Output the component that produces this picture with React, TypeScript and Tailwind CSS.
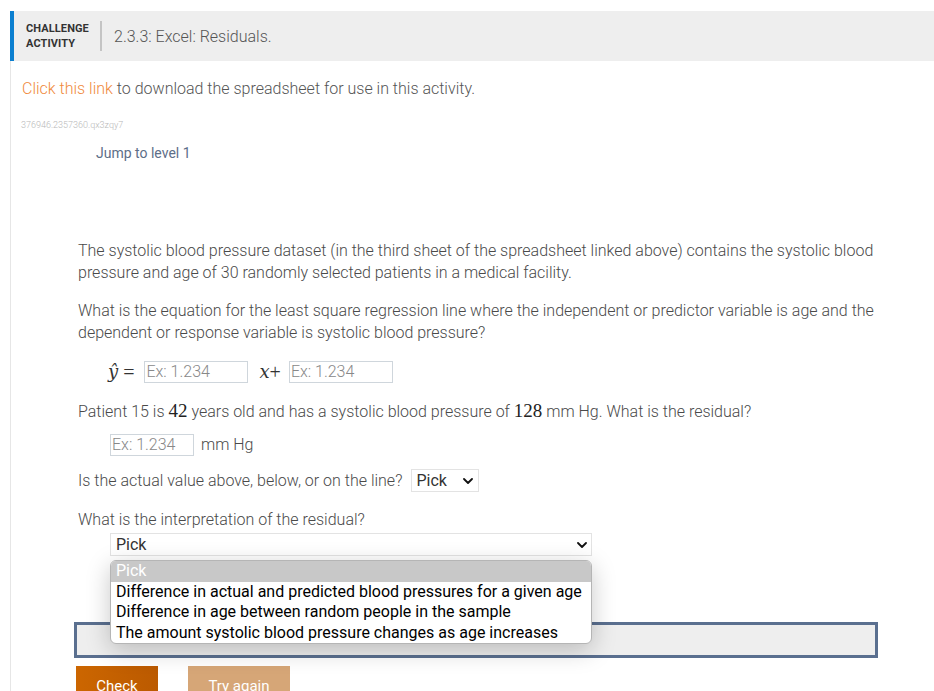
import React from "react";

const Chevron = ({ className = "" }: { className?: string }) => (
  <svg viewBox="0 0 10 6" className={className} width="10" height="6">
    <path d="M1 1 L5 5 L9 1" fill="none" stroke="#111" strokeWidth="1.8" strokeLinecap="round" strokeLinejoin="round" />
  </svg>
);

const Input = ({ w }: { w: string }) => (
  <div className={`${w} h-[22px] border border-[#cfd6dc] px-[1px] flex items-center text-[16px] text-[#888] font-light leading-none bg-white`}>
    Ex: 1.234
  </div>
);

export default function App() {
  return (
    <div
      className="relative w-[934px] h-[691px] overflow-hidden bg-white text-[#4a4a4a]"
      style={{ fontFamily: "Roboto, 'Noto Sans', sans-serif" }}
    >
      <div className="pt-[11px] pl-[10px]">
        <div className="h-[50px] bg-[#eeeeee] border-l-4 border-[#0b7fd0] flex items-center">
          <div className="pl-[12px] w-[86px] text-[11px] font-bold leading-[15px] text-[#333] tracking-[0.1px]">
            CHALLENGE
            <br />
            ACTIVITY
          </div>
          <div className="w-[2px] h-[30px] bg-[#c4c4c4]" />
          <div className="ml-[12px] pt-[2px] text-[16px] font-light text-[#555]">2.3.3: Excel: Residuals.</div>
        </div>

        <div className="border-l border-[#e6e6e6] h-[640px]">
          <div className="pl-[11px] pt-[17px] text-[16px] font-light leading-[22px] text-[#555]">
            <span className="text-[#f08a3c]">Click this link</span> to download the spreadsheet for use in this activity.
          </div>
          <div className="pl-[10px] mt-[19px] text-[9px] leading-[12px] text-[#b8b8b8] font-light">376946.2357360.qx3zqy7</div>
          <div className="pl-[85px] mt-[12px] text-[14px] leading-[20px] text-[#5d6e88]">Jump to level 1</div>

          <div className="pl-[67px] pr-[50px] mt-[77px] text-[16px] font-light leading-[22px] text-[#4a4a4a]">
            <p>
              The systolic blood pressure dataset (in the third sheet of the spreadsheet linked above) contains the systolic blood
              pressure and age of 30 randomly selected patients in a medical facility.
            </p>
            <p className="mt-[16px]">
              What is the equation for the least square regression line where the independent or predictor variable is age and the
              dependent or response variable is systolic blood pressure?
            </p>

            <div className="mt-[17px] pl-[30px] flex items-center h-[22px]">
              <span className="text-[18px] italic text-[#333] mr-[5px]" style={{ fontFamily: "'DejaVu Serif', serif" }}>
                ŷ
              </span>
              <span className="text-[20px] text-[#333] mr-[10px]" style={{ fontFamily: "'Liberation Serif', serif" }}>=</span>
              <Input w="w-[104px]" />
              <span className="ml-[11px] text-[18px] italic text-[#333]" style={{ fontFamily: "'DejaVu Serif', serif" }}>x</span>
              <span className="text-[20px] text-[#333] mr-[8px]" style={{ fontFamily: "'Liberation Serif', serif" }}>+</span>
              <Input w="w-[104px]" />
            </div>

            <p className="mt-[17px]">
              Patient 15 is{" "}
              <span className="text-[19px] text-[#222]" style={{ fontFamily: "'Liberation Serif', serif" }}>42</span>{" "}
              years old and has a systolic blood pressure of{" "}
              <span className="text-[19px] text-[#222]" style={{ fontFamily: "'Liberation Serif', serif" }}>128</span> mm Hg.
              What is the residual?
            </p>

            <div className="mt-[11px] pl-[32px] flex items-center">
              <Input w="w-[84px]" />
              <span className="ml-[7px]">mm Hg</span>
            </div>

            <div className="mt-[13px] flex items-center">
              <span>Is the actual value above, below, or on the line?</span>
              <div className="ml-[9px] w-[68px] h-[23px] border border-[#e3e3e3] flex items-center justify-between pl-[4px] pr-[5px] text-[#333] font-normal">
                <span>Pick</span>
                <Chevron />
              </div>
            </div>

            <p className="mt-[17px]">What is the interpretation of the residual?</p>

            <div className="relative ml-[32px] mt-[2px] w-[482px] h-[23px] border border-[#e3e3e3] flex items-center justify-between pl-[5px] pr-[4px] text-[#333] font-normal">
              <span>Pick</span>
              <Chevron />
              <div className="absolute left-[-1px] top-[26px] z-10 w-[482px] bg-white border border-[#b5b5b5] rounded-[6px] overflow-hidden shadow-[0_6px_24px_rgba(0,0,0,0.22)] text-[16px] leading-[20.5px] text-black font-normal">
                <div className="bg-[#c8c8c8] text-white px-[5px]">Pick</div>
                <div className="px-[5px]">Difference in actual and predicted blood pressures for a given age</div>
                <div className="px-[5px]">Difference in age between random people in the sample</div>
                <div className="px-[5px]">The amount systolic blood pressure changes as age increases</div>
              </div>
            </div>

            <div className="-ml-[4px] mt-[66px] w-[804px] h-[36px] border-[3px] border-[#5a6f8f] bg-[#eeeeee]" />

            <div className="mt-[8px] -ml-[2px] flex gap-[30px]">
              <div className="w-[82px] h-[36px] bg-gradient-to-r from-[#cc6600] to-[#bb5a00] text-white text-[15px] flex items-center justify-center pt-[4px] font-normal">
                Check
              </div>
              <div className="w-[102px] h-[36px] bg-[#d6a677] text-white text-[15px] flex items-center justify-center pt-[4px] font-normal">
                Try again
              </div>
            </div>
          </div>
        </div>
      </div>
    </div>
  );
}
